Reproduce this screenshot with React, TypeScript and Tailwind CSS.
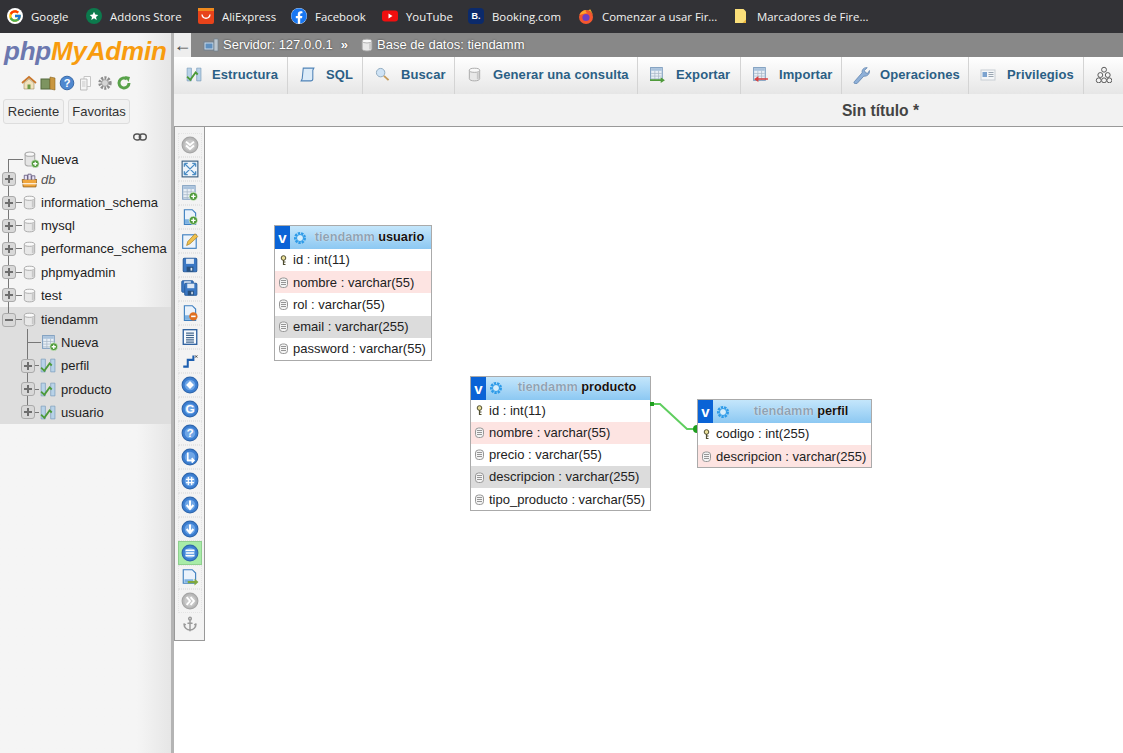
import { Anchor } from "lucide-react";
import type { ReactNode } from "react";
import { FcGoogle } from "react-icons/fc";
import { FaFacebook } from "react-icons/fa";

function Ico({ size = 16, children }: { size?: number; children: ReactNode }) {
  return (
    <svg width={size} height={size} viewBox="0 0 16 16" className="shrink-0">
      {children}
    </svg>
  );
}

function DbIcon({ size = 15 }: { size?: number }) {
  return (
    <Ico size={size}>
      <path d="M2.5 3.5v9c0 1.4 2.400 2.300 5.500 2.300s5.500-.9 5.500-2.300v-9z" fill="#e8e8e8" stroke="#a9a9a9" />
      <ellipse cx="8" cy="3.5" rx="5.500" ry="2.200" fill="#f9f9f9" stroke="#a9a9a9" />
      <rect x="10.500" y="6" width="2" height="7" fill="#c8c8c8" />
    </Ico>
  );
}

function GreenPlus({ x = 11, y = 11 }: { x?: number; y?: number }) {
  return (
    <g>
      <circle cx={x} cy={y} r="3.7" fill="#4f9a3a" stroke="#e8f5e0" strokeWidth=".6" />
      <path d={`M${x - 2} ${y}h4M${x} ${y - 2}v4`} stroke="#fff" strokeWidth="1.2" />
    </g>
  );
}

function TableGlyph() {
  return (
    <g>
      <rect x="1.5" y="1.5" width="11" height="12" fill="#e9eff6" stroke="#7f9fc0" />
      <rect x="2" y="2" width="10" height="2.5" fill="#a9c2dc" />
      <path d="M2 7h10M2 9.500h10M2 12h10M5.500 4.500v9M9 4.500v9" stroke="#a8b8c8" strokeWidth=".7" />
    </g>
  );
}

function PageGlyph() {
  return (
    <g>
      <path d="M3 1.500h7l3 3v10H3z" fill="#eaf2fb" stroke="#3d7fc0" />
      <path d="M3.500 10h9v4h-9z" fill="#7db2e2" />
    </g>
  );
}

function Floppy({ x = 0, y = 0, s = 1 }: { x?: number; y?: number; s?: number }) {
  return (
    <g transform={`translate(${x} ${y}) scale(${s})`}>
      <rect x="2" y="2" width="12" height="12" rx="1" fill="#3b78c4" stroke="#2b5f9f" />
      <rect x="4.500" y="2.500" width="7" height="4.500" fill="#dfe9f5" />
      <rect x="5" y="9.500" width="6" height="4.500" fill="#27507f" />
      <rect x="8.500" y="10.500" width="1.500" height="2.500" fill="#dfe9f5" />
    </g>
  );
}

function BlueDisc({ children }: { children: ReactNode }) {
  return (
    <Ico>
      <circle cx="8" cy="8" r="7" fill="#3c7fd2" stroke="#2e66ad" />
      <circle cx="8" cy="8" r="4.700" fill="#6fa6e6" />
      {children}
    </Ico>
  );
}

function DiscLetter({ c }: { c: string }) {
  return (
    <text x="8" y="11.600" textAnchor="middle" fontSize="10.500" fontWeight="700" fontFamily="Liberation Sans" fill="#fff">
      {c}
    </text>
  );
}

function GrayDisc({ d }: { d: string }) {
  return (
    <Ico>
      <circle cx="8" cy="8" r="7" fill="#b9b9b9" stroke="#a5a5a5" />
      <circle cx="8" cy="8" r="5" fill="#c9c9c9" />
      <path d={d} fill="none" stroke="#fff" strokeWidth="1.700" />
    </Ico>
  );
}

const tools: { key: string; node: ReactNode; active?: boolean }[] = [
  { key: "down", node: <GrayDisc d="M4.500 5l3.500 3 3.500-3M4.500 8.500l3.500 3 3.500-3" /> },
  {
    key: "full",
    node: (
      <Ico>
        <rect x="1" y="1" width="14" height="14" fill="#eef4fa" stroke="#3b5f80" />
        <path d="M3 3l10 10M13 3L3 13M3 3h3M3 3v3M13 3h-3M13 3v3M3 13h3M3 13v-3M13 13h-3M13 13v-3" stroke="#4a8cc4" strokeWidth="1.200" fill="none" />
      </Ico>
    ),
  },
  { key: "add", node: <Ico><TableGlyph /><GreenPlus /></Ico> },
  { key: "newpage", node: <Ico><PageGlyph /><GreenPlus /></Ico> },
  {
    key: "edit",
    node: (
      <Ico>
        <rect x="1.500" y="2.500" width="12" height="12" fill="#edf4fb" stroke="#3d7fc0" />
        <path d="M5 12l1-3.500 6.500-7 2.500 2.500-7 6.500z" fill="#efc14e" stroke="#a77a1e" strokeWidth=".6" />
      </Ico>
    ),
  },
  { key: "save", node: <Ico><Floppy /></Ico> },
  {
    key: "saveas",
    node: (
      <Ico>
        <Floppy x={-1} y={-1} s={0.85} />
        <Floppy x={1.5} y={1} s={0.9} />
      </Ico>
    ),
  },
  {
    key: "delete",
    node: (
      <Ico>
        <PageGlyph />
        <circle cx="11" cy="11" r="3.700" fill="#e07020" />
        <path d="M9 11h4" stroke="#fff" strokeWidth="1.400" />
      </Ico>
    ),
  },
  {
    key: "list",
    node: (
      <Ico>
        <rect x="2" y="1.500" width="12" height="13" fill="#f5f9fd" stroke="#2f62a0" strokeWidth="1.200" />
        <path d="M4.500 4.500h7M4.500 6.500h7M4.500 8.500h7M4.500 10.500h7M4.500 12.500h7" stroke="#44688f" />
      </Ico>
    ),
  },
  {
    key: "route",
    node: (
      <Ico>
        <path d="M2 13h4V7h5V3" fill="none" stroke="#1d5fb0" strokeWidth="1.800" />
        <path d="M12.500 5l2-2M12.500 3l2 2" stroke="#333" strokeWidth=".8" />
      </Ico>
    ),
  },
  { key: "diamond", node: <BlueDisc><path d="M8 4.500L11.500 8 8 11.500 4.500 8z" fill="#fff" /></BlueDisc> },
  { key: "g", node: <BlueDisc><DiscLetter c="G" /></BlueDisc> },
  { key: "q", node: <BlueDisc><DiscLetter c="?" /></BlueDisc> },
  { key: "l", node: <BlueDisc><path d="M6 4v7h5M9.500 9l2 2-2 2" fill="none" stroke="#fff" strokeWidth="1.500" /></BlueDisc> },
  { key: "hash", node: <BlueDisc><path d="M6.500 4.500v7M9.500 4.500v7M4.500 6.500h7M4.500 9.500h7" stroke="#fff" strokeWidth="1.100" /></BlueDisc> },
  { key: "d1", node: <BlueDisc><path d="M8 4v7M5 8l3 3.500L11 8" fill="none" stroke="#fff" strokeWidth="1.800" /></BlueDisc> },
  { key: "d2", node: <BlueDisc><path d="M8 4v7M5 8l3 3.500L11 8" fill="none" stroke="#fff" strokeWidth="1.800" /></BlueDisc> },
  {
    key: "wide",
    active: true,
    node: <BlueDisc><path d="M4 5.500h8M4 10.500h8M4.500 8h7" fill="none" stroke="#fff" strokeWidth="1.300" /></BlueDisc>,
  },
  {
    key: "export",
    node: (
      <Ico>
        <path d="M2 1.500h8l3 3v9H2z" fill="#eaf2fb" stroke="#3d7fc0" />
        <path d="M3 10h8v3H3z" fill="#7db2e2" />
        <path d="M6 11.500h6v-2l3.500 3-3.500 3v-2H6z" fill="#7fa83e" />
      </Ico>
    ),
  },
  { key: "right", node: <GrayDisc d="M5 4.500l3 3.500-3 3.500M8.500 4.500l3 3.500-3 3.500" /> },
];

const bookmarks: { label: string; icon: ReactNode; w: string }[] = [
  { label: "Google", w: "w-[79px]", icon: <span className="flex h-4 w-4 items-center justify-center rounded-full bg-white"><FcGoogle size={14} /></span> },
  {
    label: "Addons Store",
    w: "w-[112px]",
    icon: (
      <Ico>
        <circle cx="8" cy="8" r="8" fill="#0c7a4d" />
        <path d="M8 3.800l1.300 2.800 3 .3-2.300 2 .7 3L8 10.300 5.300 11.900l.7-3-2.300-2 3-.3z" fill="#fff" />
      </Ico>
    ),
  },
  {
    label: "AliExpress",
    w: "w-[93px]",
    icon: (
      <Ico>
        <rect width="16" height="16" rx="2" fill="#e8431a" />
        <rect width="16" height="3" fill="#f08a1e" />
        <path d="M4 6.500c.6 5 7.400 5 8 0" fill="none" stroke="#fff" strokeWidth="1.400" />
      </Ico>
    ),
  },
  { label: "Facebook", w: "w-[91px]", icon: <span className="flex h-4 w-4 items-center justify-center rounded-full bg-white"><FaFacebook size={16} color="#1877f2" /></span> },
  {
    label: "YouTube",
    w: "w-[86px]",
    icon: (
      <Ico>
        <rect x="0" y="2.500" width="16" height="11" rx="3" fill="#f00f0f" />
        <path d="M6.500 5.500v5l4-2.500z" fill="#fff" />
      </Ico>
    ),
  },
  {
    label: "Booking.com",
    w: "w-[110px]",
    icon: (
      <span className="flex h-4 w-4 items-center justify-center rounded-sm bg-[#0b2a6b] text-[9px] font-bold text-white [font-family:'Liberation_Sans',sans-serif]">
        B.
      </span>
    ),
  },
  {
    label: "Comenzar a usar Fir...",
    w: "w-[155px]",
    icon: (
      <Ico>
        <circle cx="8" cy="9" r="7" fill="#f4572f" />
        <path d="M8 2c4 0 7 3 7 7 0-4-2-6-3-8-.500 1.500-2 1-4 1z" fill="#ffb52c" />
        <path d="M1.500 7C3 3.500 6 2 8 2c-1 1.500 0 2.500 2 3.500C8 4.500 4 6 1.500 7z" fill="#ffa62b" />
        <circle cx="8" cy="9.500" r="3.600" fill="#6f3fc4" />
      </Ico>
    ),
  },
  {
    label: "Marcadores de Fire...",
    w: "w-[150px]",
    icon: (
      <Ico>
        <path d="M2 1h8.500L13 3.500V15H2z" fill="#fadf7a" />
        <path d="M9.500 15H13v-3.500z" fill="#e9b53c" />
      </Ico>
    ),
  },
];

const tabs: { label: string; w: string; icon: ReactNode }[] = [
  {
    label: "Estructura",
    w: "w-[114px]",
    icon: (
      <Ico size={17}>
        <path d="M2 2h4v12H2zM11 2h4v12h-4z" fill="#b8d2e8" stroke="#7e9fbd" strokeWidth=".7" />
        <path d="M2 10l3 3 5-7 2 2" fill="none" stroke="#4c9a38" strokeWidth="1.700" />
      </Ico>
    ),
  },
  {
    label: "SQL",
    w: "w-[75px]",
    icon: (
      <Ico size={17}>
        <path d="M4 2h10l-1 2v8c0 1-1 2-2 2H2l1-2z" fill="#dcebf8" stroke="#4f83b7" />
      </Ico>
    ),
  },
  {
    label: "Buscar",
    w: "w-[92px]",
    icon: (
      <Ico size={15}>
        <circle cx="6" cy="6" r="4.500" fill="#cfe3f5" stroke="#8ca7be" />
        <path d="M9.500 9.500l5 4.500" stroke="#c49a5a" strokeWidth="2" />
      </Ico>
    ),
  },
  { label: "Generar una consulta", w: "w-[183px]", icon: <DbIcon size={15} /> },
  {
    label: "Exportar",
    w: "w-[103px]",
    icon: (
      <Ico size={17}>
        <TableGlyph />
        <path d="M1 12.500h10v-2l4 3-4 2.500v-2H1z" fill="#4f9a3a" />
      </Ico>
    ),
  },
  {
    label: "Importar",
    w: "w-[101px]",
    icon: (
      <Ico size={17}>
        <TableGlyph />
        <path d="M15 11.500H6v-2l-4 3 4 2.500v-2h9z" fill="#d94040" />
      </Ico>
    ),
  },
  {
    label: "Operaciones",
    w: "w-[127px]",
    icon: (
      <Ico size={18}>
        <path d="M2 14l7-8c-.5-2 1-5 4.500-4.500L11 4l1 2 2 .5 1.500-2.500c.5 3-2 5.500-5 5L4.500 15.500C3 16.500 1 15 2 14z" fill="#8fb0d8" stroke="#5f83ad" strokeWidth=".7" />
      </Ico>
    ),
  },
  {
    label: "Privilegios",
    w: "w-[115px]",
    icon: (
      <Ico size={16}>
        <rect x="1" y="3" width="14" height="10" fill="#f4f6f8" stroke="#c8ced4" />
        <rect x="2.500" y="5" width="4.500" height="5" fill="#7ca3cf" />
        <path d="M8.500 5.500h5M8.500 7.500h5M8.500 9.500h5" stroke="#9aa6b2" />
      </Ico>
    ),
  },
];

function Expander({ minus }: { minus?: boolean }) {
  return (
    <span className="z-10 flex h-[14px] w-[14px] shrink-0 items-center justify-center rounded-[3px] border border-[#aaa] bg-[#d8d8d8]">
      <svg width="10" height="10" viewBox="0 0 10 10">
        <path d={minus ? "M1 5h8" : "M1 5h8M5 1v8"} stroke="#6e6e6e" strokeWidth="2" />
      </svg>
    </span>
  );
}

function Dash() {
  return <span className="h-px w-[6px] shrink-0 bg-[#777]" />;
}

function TreeTableIcon() {
  return (
    <Ico size={17}>
      <path d="M2 2h4v12H2zM11 2h4v12h-4z" fill="#b8d2e8" stroke="#7e9fbd" strokeWidth=".7" />
      <path d="M2 10l3 3 5-7 2 2" fill="none" stroke="#4c9a38" strokeWidth="1.700" />
    </Ico>
  );
}

function SidebarTree() {
  const dbs = ["information_schema", "mysql", "performance_schema", "phpmyadmin", "test"];
  const tables = ["perfil", "producto", "usuario"];
  return (
    <div className="relative mt-[8px] text-[13px] leading-[23px] text-[#1d1d1d]">
      <span className="absolute left-[8px] top-[10px] h-[160px] w-px bg-[#777]" />
      <span className="absolute left-[27px] top-[180px] h-[84px] w-px bg-[#777]" />
      <div className="flex h-[20px] items-center pl-[8px]">
        <span className="h-px w-[15px] bg-[#777]" />
        <Ico size={17}>
          <path d="M2 3v9c0 1.400 2 2.200 4.500 2.200S11 13.400 11 12V3z" fill="#e4e4e4" stroke="#a9a9a9" />
          <ellipse cx="6.500" cy="3" rx="4.500" ry="2" fill="#f7f7f7" stroke="#a9a9a9" />
          <GreenPlus x={11.5} y={12} />
        </Ico>
        <span className="ml-px">Nueva</span>
      </div>
      <div className="flex h-[22px] items-center pb-[2px] pl-[2px]">
        <Expander />
        <span className="ml-[4px] flex">
          <Ico size={17}>
            <path d="M2 8h14l-1 7H3z" fill="#f0a63c" stroke="#8a5a1a" strokeWidth=".7" />
            <path d="M4 8V4h3v4M7.500 8V3h3v5M11 8V4.500h3V8" fill="#e8e4f5" stroke="#54486f" strokeWidth=".7" />
            <path d="M2 12h14" stroke="#fff" />
          </Ico>
        </span>
        <span className="ml-[4px] italic text-[#555]">db</span>
      </div>
      {dbs.map((d) => (
        <div key={d} className="flex h-[23.2px] items-center pl-[2px]">
          <Expander />
          <Dash />
          <DbIcon />
          <span className="ml-[4px] whitespace-nowrap">{d}</span>
        </div>
      ))}
      <div className="bg-[#dedede] pt-[1px]">
        <div className="flex h-[23.2px] items-center pl-[2px]">
          <Expander minus />
          <Dash />
          <DbIcon />
          <span className="ml-[4px]">tiendamm</span>
        </div>
        <div className="flex h-[23.2px] items-center pl-[27px]">
          <span className="h-px w-[14px] bg-[#777]" />
          <Ico size={17}>
            <TableGlyph />
            <GreenPlus x={12} y={12} />
          </Ico>
          <span className="ml-[3px]">Nueva</span>
        </div>
        {tables.map((t) => (
          <div key={t} className="flex h-[23.2px] items-center pl-[21px]">
            <Expander />
            <span className="h-px w-[4px] shrink-0 bg-[#777]" />
            <TreeTableIcon />
            <span className="ml-[5px]">{t}</span>
          </div>
        ))}
      </div>
    </div>
  );
}

function Key() {
  return (
    <svg width="7" height="11" viewBox="0 0 7 11" className="shrink-0">
      <circle cx="3.500" cy="3" r="2.300" fill="#eadf98" stroke="#4f4d30" />
      <path d="M3.500 5v5M3.500 7h2M3.500 9.500h2" stroke="#4f4d30" strokeWidth="1.200" />
    </svg>
  );
}

function ColIcon() {
  return (
    <svg width="9" height="11" viewBox="0 0 9 11" className="shrink-0">
      <rect x=".5" y="1" width="8" height="9.500" rx="3" fill="#f4f4f4" stroke="#969696" />
      <path d="M2 3.500h5M2 5.500h5M2 7.500h5" stroke="#969696" />
    </svg>
  );
}

type Col = { name: string; kind?: "pk" };

function DesignTable({ db, name, cols, pos }: { db: string; name: string; cols: Col[]; pos: string }) {
  return (
    <div className={`absolute border border-[#aaa] bg-white text-[13px] text-[#222] ${pos}`}>
      <div className="flex h-[23px] items-center bg-gradient-to-b from-[#c4e6fb] to-[#8cc8f2] text-[12.7px]">
        <span className="flex h-full w-[15px] shrink-0 items-center justify-center bg-[#0a63d6] text-[15px] font-bold leading-none text-white">v</span>
        <svg width="14" height="14" viewBox="0 0 14 14" className="ml-[3px] shrink-0">
          <circle cx="7" cy="7" r="4.500" fill="none" stroke="#2e9be8" strokeWidth="3" strokeDasharray="2.200 .9" />
          <circle cx="7" cy="7" r="3.500" fill="#d6eefc" stroke="#2e9be8" />
        </svg>
        <span className="flex-1 whitespace-nowrap pl-[1px] text-center font-bold [text-shadow:0_0_1px_#fff]">
          <span className="text-[#8da3b4]">{db}</span> <span className="text-[#111]">{name}</span>
        </span>
      </div>
      {cols.map((c, i) => (
        <div
          key={c.name}
          className={`flex h-[22.2px] items-center gap-[5px] whitespace-nowrap pl-[4px] pr-[4px] ${
            i === 1 ? "bg-[#fde4e2]" : i === 3 ? "bg-[#dcdcdc]" : "bg-white"
          }`}
        >
          <span className="flex w-[9px] justify-center">{c.kind === "pk" ? <Key /> : <ColIcon />}</span>
          <span>{c.name}</span>
        </div>
      ))}
    </div>
  );
}

export default function App() {
  return (
    <div className="flex h-[753px] w-[1123px] flex-col overflow-hidden bg-white [font-family:'Liberation_Sans',Arial,sans-serif]">
      {/* bookmarks */}
      <div className="flex h-[33px] shrink-0 items-center bg-[#323236] pl-[7px] text-[11.4px] text-[#f2f2f2] [font-family:'Open_Sans',sans-serif]">
        {bookmarks.map((b) => (
          <div key={b.label} className={`flex items-center gap-[8px] whitespace-nowrap ${b.w}`}>
            {b.icon}
            <span>{b.label}</span>
          </div>
        ))}
      </div>

      <div className="flex min-h-0 flex-1">
        {/* sidebar */}
        <aside className="w-[174px] shrink-0 overflow-hidden border-r-[3px] border-[#b4b4b4] bg-gradient-to-r from-[#f5f5f5] from-80% to-[#e6e6e6]">
          <div className="pl-[4px] pt-[3px] text-[26px] font-bold italic leading-[30px] tracking-[-0.2px]">
            <span className="text-[#6c78af]">php</span>
            <span className="text-[#f89c0e]">MyAdmin</span>
          </div>
          <div className="mt-[9px] flex items-center justify-center gap-[3px] pr-[19px]">
            <Ico>
              <path d="M1 8l7-6 7 6" fill="none" stroke="#c9772c" strokeWidth="1.800" />
              <path d="M3 8v6h10V8L8 4z" fill="#f2e2bd" stroke="#9a8a62" strokeWidth=".6" />
              <rect x="6.500" y="9.500" width="3" height="4.500" fill="#6d9a46" />
            </Ico>
            <Ico>
              <rect x="1" y="4" width="9" height="10" fill="#7d9460" stroke="#54683c" />
              <path d="M10 2l5 1v12l-5-1z" fill="#c9963e" stroke="#8a6420" strokeWidth=".6" />
            </Ico>
            <Ico>
              <circle cx="8" cy="8" r="6.800" fill="#4f88cf" stroke="#3a6aa8" />
              <text x="8" y="12" textAnchor="middle" fontSize="11" fontWeight="700" fill="#fff">?</text>
            </Ico>
            <Ico>
              <path d="M6 1.500h6.500v10H6z" fill="#fafafa" stroke="#c6c6c6" />
              <path d="M2.500 4h6.500v11H2.500z" fill="#f4f4f4" stroke="#bdbdbd" />
              <path d="M4 7h3.500M4 9h3.500M4 11h3.500" stroke="#c9c9c9" />
            </Ico>
            <Ico>
              <circle cx="8" cy="8" r="5" fill="none" stroke="#8d8d8d" strokeWidth="3.400" strokeDasharray="2 1.200" />
              <circle cx="8" cy="8" r="3.400" fill="#d6d6d6" stroke="#8d8d8d" strokeWidth=".7" />
            </Ico>
            <Ico>
              <path d="M13 8A5 5 0 1 1 11 4" fill="none" stroke="#58a24a" strokeWidth="3" />
              <path d="M9 1l5 1-1.500 5z" fill="#58a24a" />
            </Ico>
          </div>
          <div className="mt-[8px] flex gap-[4px] pl-[3px] text-[13px] text-[#333]">
            <span className="flex h-[25px] w-[61px] items-center justify-center rounded-[3px] border border-[#ddd] bg-[#f1f1f1]">Reciente</span>
            <span className="flex h-[25px] w-[62px] items-center justify-center rounded-[3px] border border-[#ddd] bg-[#f1f1f1]">Favoritas</span>
          </div>
          <div className="mt-[9px] flex justify-end pr-[24px]">
            <svg width="14" height="8" viewBox="0 0 14 8">
              <rect x=".7" y="1" width="7" height="6" rx="3" fill="none" stroke="#555" strokeWidth="1.400" />
              <rect x="6.300" y="1" width="7" height="6" rx="3" fill="none" stroke="#555" strokeWidth="1.400" />
            </svg>
          </div>
          <SidebarTree />
        </aside>

        {/* main */}
        <main className="flex min-w-0 flex-1 flex-col">
          <div className="flex h-[24px] shrink-0 items-center bg-[#888] text-[13px] text-white [text-shadow:0_0_2px_#333]">
            <span className="flex h-full w-[17px] items-center justify-center bg-[#eee] text-[18px] text-[#444] [text-shadow:none]">←</span>
            <span className="ml-[12px] flex items-center gap-[4px]">
              <Ico>
                <rect x="1" y="5" width="10" height="8" fill="#c9d8e8" stroke="#70808f" />
                <rect x="2.500" y="6.500" width="7" height="5" fill="#5e8fbf" />
                <rect x="11" y="2" width="4" height="12" fill="#bcc6cf" stroke="#70808f" strokeWidth=".7" />
              </Ico>
              Servidor: 127.0.0.1
            </span>
            <span className="ml-[8px] font-bold">»</span>
            <span className="ml-[12px] flex items-center gap-[3px]">
              <DbIcon size={14} />
              Base de datos: tiendamm
            </span>
          </div>

          <div className="flex h-[37px] shrink-0 overflow-hidden bg-gradient-to-b from-white to-[#e6e6e6] text-[13px] font-bold tracking-[0.1px] text-[#2b5f85]">
            {tabs.map((t) => (
              <div key={t.label} className={`flex h-full shrink-0 items-center whitespace-nowrap border-r border-[#d4d4d4] pb-[2px] ${t.w}`}>
                <span className="flex w-[38px] justify-center">{t.icon}</span>
                <span>{t.label}</span>
              </div>
            ))}
            <div className="flex h-full w-[40px] shrink-0 items-center pb-[2px] pl-[11px]">
              <Ico size={17}>
                <g fill="#f4f4f4" stroke="#555" strokeWidth=".9">
                  <circle cx="8.500" cy="3.500" r="2.300" />
                  <circle cx="5" cy="8.500" r="2.300" />
                  <circle cx="12" cy="8.500" r="2.300" />
                  <circle cx="3.500" cy="13.500" r="2.300" />
                  <circle cx="8.500" cy="13.500" r="2.300" />
                  <circle cx="13.500" cy="13.500" r="2.300" />
                </g>
              </Ico>
            </div>
          </div>

          <div className="flex h-[33px] shrink-0 items-center justify-end border-b border-[#999] bg-[#f2f2f2] pr-[204px] pt-[1px] text-[15.6px] font-bold text-[#444]">
            Sin título *
          </div>

          <div className="relative flex-1 bg-white">
            <div className="absolute left-0 top-0 flex h-[514px] w-[31px] flex-col items-center border border-t-0 border-[#999] bg-[#f3f3f3] pt-[6px]">
              {tools.map((t) => (
                <span
                  key={t.key}
                  className={`flex h-[24px] w-[24px] shrink-0 items-center justify-center [&>svg]:h-[18px] [&>svg]:w-[18px] ${
                    t.active ? "border border-[#8fd08f] bg-[#a8eca8]" : "border border-dotted border-[#e4e4e4]"
                  }`}
                >
                  {t.node}
                </span>
              ))}
              <span className="flex h-[21px] w-[24px] shrink-0 items-center justify-center">
                <Anchor size={16} color="#9a9a9a" strokeWidth={2.2} />
              </span>
            </div>

            <DesignTable
              db="tiendamm"
              name="usuario"
              pos="left-[100px] top-[98px] w-[158px]"
              cols={[
                { name: "id : int(11)", kind: "pk" },
                { name: "nombre : varchar(55)" },
                { name: "rol : varchar(55)" },
                { name: "email : varchar(255)" },
                { name: "password : varchar(55)" },
              ]}
            />
            <DesignTable
              db="tiendamm"
              name="producto"
              pos="left-[296px] top-[248.5px] w-[181px]"
              cols={[
                { name: "id : int(11)", kind: "pk" },
                { name: "nombre : varchar(55)" },
                { name: "precio : varchar(55)" },
                { name: "descripcion : varchar(255)" },
                { name: "tipo_producto : varchar(55)" },
              ]}
            />
            <DesignTable
              db="tiendamm"
              name="perfil"
              pos="left-[523px] top-[272px] w-[175px]"
              cols={[
                { name: "codigo : int(255)", kind: "pk" },
                { name: "descripcion : varchar(255)" },
              ]}
            />

            <svg width="60" height="40" viewBox="0 0 60 40" className="absolute left-[476px] top-[269px]">
              <path d="M1 8h9l27 25h9" fill="none" stroke="#5fce5f" strokeWidth="2" />
              <rect x="0" y="6" width="4" height="4" fill="#1e9e1e" />
              <path d="M47 29a4 4 0 0 0 0 8z" fill="#1e9e1e" />
            </svg>
          </div>
        </main>
      </div>
    </div>
  );
}
